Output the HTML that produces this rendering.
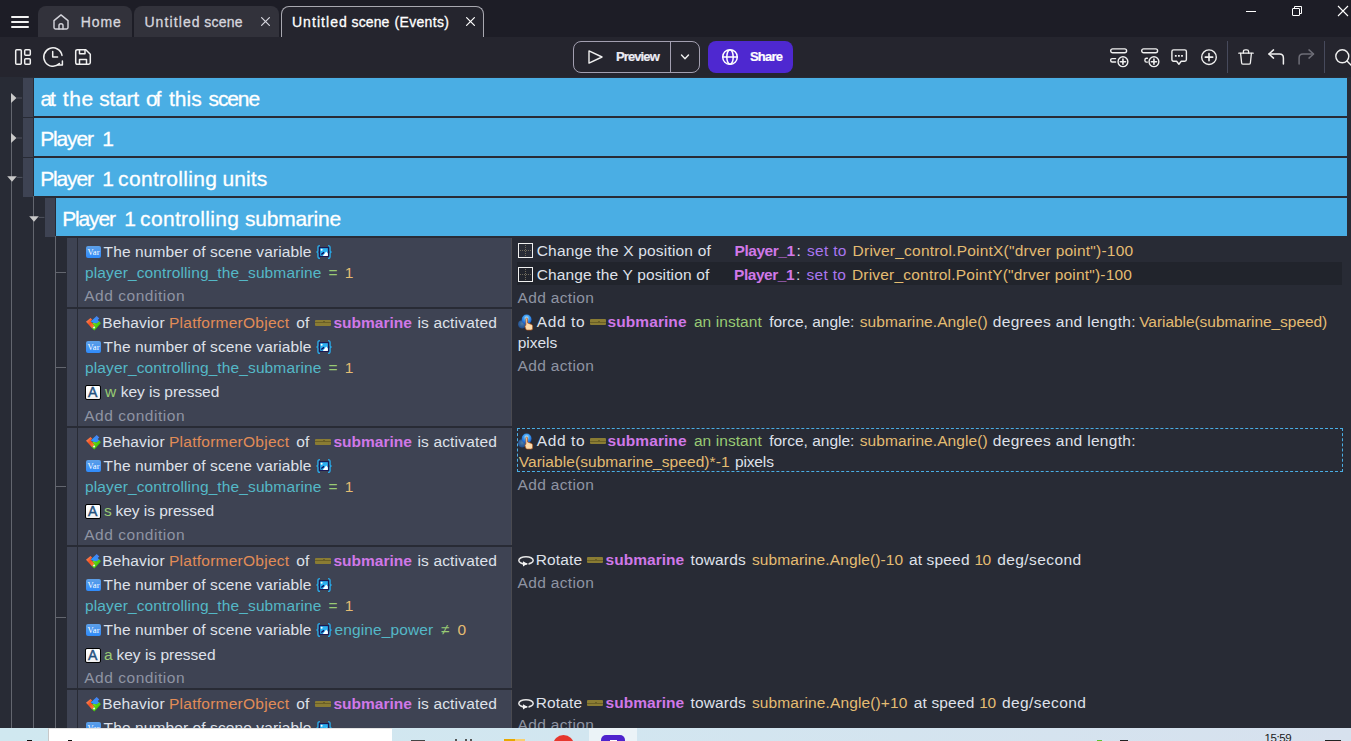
<!DOCTYPE html>
<html><head><meta charset="utf-8"><title>Untitled scene (Events)</title>
<style>
html,body{margin:0;padding:0;}
body{width:1351px;height:741px;overflow:hidden;background:#282b35;position:relative;font-family:"Liberation Sans",sans-serif;}
.t{position:absolute;white-space:pre;line-height:1;}
svg{position:absolute;overflow:visible;}
</style></head><body>
<div style="position:absolute;left:0px;top:0px;width:1351px;height:37px;background:#1d1d26;"></div><div style="position:absolute;left:11px;top:16px;width:18px;height:2px;background:#f2f2f2;border-radius:1px;"></div><div style="position:absolute;left:11px;top:21px;width:18px;height:2px;background:#f2f2f2;border-radius:1px;"></div><div style="position:absolute;left:11px;top:26px;width:18px;height:2px;background:#f2f2f2;border-radius:1px;"></div><div style="position:absolute;left:38px;top:6px;width:94px;height:31px;background:#32323b;border-radius:8px 8px 0 0;"></div><svg style="left:53px;top:14px" width="16" height="16" viewBox="0 0 16 16" fill="none" stroke="#d2d2d9" stroke-width="1.45" stroke-linejoin="round" stroke-linecap="round"><path d="M1 6.6 L8 0.9 L15 6.6 V13.6 Q15 15 13.6 15 H2.4 Q1 15 1 13.6 Z"/><path d="M6 15 V11.6 Q6 9.8 8 9.8 Q10 9.8 10 11.6 V15"/></svg><span class="t" style="left:80.70px;top:15.15px;font-size:14px;color:#d6d6de;letter-spacing:0.914px;-webkit-text-stroke:0.3px #d6d6de;">Home</span><div style="position:absolute;left:134px;top:6px;width:145px;height:31px;background:#32323b;border-radius:8px 8px 0 0;"></div><span class="t" style="left:144.40px;top:15.15px;font-size:14px;color:#d6d6de;letter-spacing:1.102px;-webkit-text-stroke:0.3px #d6d6de;">Untitled</span><span class="t" style="left:204.20px;top:15.15px;font-size:14px;color:#d6d6de;letter-spacing:0.257px;-webkit-text-stroke:0.3px #d6d6de;">scene</span><svg style="left:261px;top:17px" width="9" height="9" viewBox="0 0 9 9" stroke="#d6d6de" stroke-width="1.2" stroke-linecap="round"><path d="M0.6 0.6 L8.4 8.4 M8.4 0.6 L0.6 8.4"/></svg><div style="position:absolute;left:281px;top:6px;width:201px;height:31px;background:#25252e;border:1px solid #a8a8b0;border-bottom:none;border-radius:8px 8px 0 0;"></div><span class="t" style="left:291.90px;top:15.15px;font-size:14px;color:#ffffff;letter-spacing:1.074px;-webkit-text-stroke:0.3px #fff;">Untitled</span><span class="t" style="left:351.50px;top:15.15px;font-size:14px;color:#ffffff;letter-spacing:0.132px;-webkit-text-stroke:0.3px #fff;">scene</span><span class="t" style="left:394.60px;top:15.15px;font-size:14px;color:#ffffff;letter-spacing:0.305px;-webkit-text-stroke:0.3px #fff;">(Events)</span><svg style="left:466px;top:17px" width="9" height="9" viewBox="0 0 9 9" stroke="#ffffff" stroke-width="1.2" stroke-linecap="round"><path d="M0.6 0.6 L8.4 8.4 M8.4 0.6 L0.6 8.4"/></svg><div style="position:absolute;left:1246px;top:11px;width:10px;height:1px;background:#ffffff;"></div><svg style="left:1292px;top:6px" width="10" height="10" viewBox="0 0 10 10" fill="none" stroke="#ffffff" stroke-width="1"><rect x="0.5" y="2.5" width="7" height="7" rx="0.3"/><path d="M2.5 2.5 V0.5 H9.5 V7.5 H7.5"/></svg><svg style="left:1338px;top:6px" width="10" height="10" viewBox="0 0 10 10" stroke="#ffffff" stroke-width="1.1"><path d="M0 0 L10 10 M10 0 L0 10"/></svg><div style="position:absolute;left:0px;top:37px;width:1351px;height:40px;background:#25252e;"></div><svg style="left:15px;top:49px" width="16" height="16" viewBox="0 0 16 16" fill="none" stroke="#f0f0f0" stroke-width="1.5"><rect x="0.7" y="0.7" width="5.6" height="14.6" rx="1"/><rect x="9.7" y="0.7" width="5.6" height="5.6" rx="1"/><rect x="9.7" y="9.7" width="5.6" height="5.6" rx="1"/></svg><svg style="left:43px;top:47px" width="20" height="20" viewBox="0 0 20 20" fill="none" stroke="#f0f0f0" stroke-width="1.5" stroke-linecap="round" stroke-linejoin="round"><path d="M19 8.4 A9.2 9.2 0 1 0 16.4 16.6"/><path d="M19.4 14 V18 H15.4"/><path d="M9.7 4.6 V9.9 H14.6"/></svg><svg style="left:75px;top:49px" width="16" height="16" viewBox="0 0 16 16" fill="none" stroke="#f0f0f0" stroke-width="1.5" stroke-linejoin="round"><path d="M2.4 0.7 H10.8 L15.3 5.2 V13.6 Q15.3 15.3 13.6 15.3 H2.4 Q0.7 15.3 0.7 13.6 V2.4 Q0.7 0.7 2.4 0.7 Z"/><path d="M4.5 0.7 V4.7 H10 V0.7"/><path d="M4.5 15.3 V10.5 H11.5 V15.3"/></svg><div style="position:absolute;left:573px;top:41px;width:125px;height:30px;border:1px solid #a29fb0;border-radius:8px;"></div><div style="position:absolute;left:670px;top:41px;width:1px;height:32px;background:#a29fb0;"></div><svg style="left:587.7px;top:50px" width="15" height="14" viewBox="0 0 15 14" fill="none" stroke="#f0f0f0" stroke-width="1.4" stroke-linejoin="round"><path d="M1 0.9 L14 7 L1 13.1 Z"/></svg><span class="t" style="left:615.90px;top:50.00px;font-size:13px;color:#ececf4;font-weight:700;letter-spacing:-0.872px;-webkit-text-stroke:0.2px #ececf4;">Preview</span><svg style="left:680px;top:54px" width="10" height="6" viewBox="0 0 10 6" fill="none" stroke="#f0f0f0" stroke-width="1.4" stroke-linecap="round" stroke-linejoin="round"><path d="M1.5 1 L5 4.7 L8.5 1"/></svg><div style="position:absolute;left:708px;top:41px;width:85px;height:32px;background:#4e28d0;border-radius:8px;"></div><svg style="left:722px;top:49px" width="16" height="16" viewBox="0 0 16 16" fill="none" stroke="#ffffff" stroke-width="1.5"><circle cx="8" cy="8" r="7.3"/><ellipse cx="8" cy="8" rx="3.2" ry="7.3"/><path d="M0.7 8 H15.3"/></svg><span class="t" style="left:750.00px;top:50.00px;font-size:13px;color:#ffffff;font-weight:700;letter-spacing:-0.800px;-webkit-text-stroke:0.2px #fff;">Share</span><svg style="left:1109.6px;top:48.4px" width="19" height="20" viewBox="0 0 19 20" fill="none" stroke="#f0f0f0" stroke-width="1.4" stroke-linecap="round"><rect x="0.7" y="0.9" width="15.9" height="3.9" rx="1.95"/><path d="M5.6 10.6 H2.2 Q0.7 10.6 0.7 12.1 V12.5 Q0.7 14 2.2 14 H5.6"/><circle cx="12.95" cy="13.7" r="4.9"/><path d="M12.95 11.1 V16.3 M10.35 13.7 H15.55" stroke-width="1.6"/></svg><svg style="left:1140.6px;top:48.4px" width="19" height="20" viewBox="0 0 19 20" fill="none" stroke="#f0f0f0" stroke-width="1.4" stroke-linecap="round"><rect x="0.7" y="0.9" width="15.9" height="3.9" rx="1.95"/><path d="M6.4 10.3 H5.6 Q3.9 10.3 3.9 12 V12.4 Q3.9 14.1 5.6 14.1 H6.4"/><circle cx="12.95" cy="13.7" r="4.9"/><path d="M12.95 11.1 V16.3 M10.35 13.7 H15.55" stroke-width="1.6"/></svg><svg style="left:1171px;top:49px" width="17" height="17" viewBox="0 0 17 17" fill="none" stroke="#f0f0f0" stroke-width="1.4" stroke-linejoin="round"><path d="M2.6 0.85 H13.7 Q15.4 0.85 15.4 2.55 V10.55 Q15.4 12.25 13.7 12.25 H10.2 L7.9 15.2 L5.6 12.25 H2.6 Q0.9 12.25 0.9 10.55 V2.55 Q0.9 0.85 2.6 0.85 Z"/><path d="M3.9 6.9 H5.7 M7 6.9 H8.8 M10.1 6.9 H11.9" stroke-width="1.7"/></svg><svg style="left:1201px;top:49px" width="17" height="17" viewBox="0 0 17 17" fill="none" stroke="#f0f0f0" stroke-width="1.4" stroke-linecap="round"><circle cx="8" cy="8.15" r="7.3"/><path d="M8 4.5 V11.8 M4.3 8.15 H11.7" stroke-width="1.6"/></svg><div style="position:absolute;left:1227px;top:41px;width:1px;height:32px;background:#474a5c;"></div><svg style="left:1238px;top:49px" width="16" height="16" viewBox="0 0 16 16" fill="none" stroke="#f0f0f0" stroke-width="1.3" stroke-linecap="round" stroke-linejoin="round"><path d="M0.8 4.2 H15.2"/><path d="M5.4 4 V2.6 Q5.4 0.8 7.2 0.8 H8.8 Q10.6 0.8 10.6 2.6 V4"/><path d="M2.6 4.4 L3.6 13.8 Q3.8 15.2 5.2 15.2 H10.8 Q12.2 15.2 12.4 13.8 L13.4 4.4"/></svg><svg style="left:1268px;top:49px" width="17" height="16" viewBox="0 0 17 16" fill="none" stroke="#f0f0f0" stroke-width="1.5" stroke-linecap="round" stroke-linejoin="round"><path d="M5.5 0.9 L0.9 5 L5.5 9.1"/><path d="M1.1 5 H11.5 Q15.4 5 15.4 8.9 V15"/></svg><svg style="left:1298px;top:49px" width="17" height="16" viewBox="0 0 17 16" fill="none" stroke="#6e6e77" stroke-width="1.5" stroke-linecap="round" stroke-linejoin="round"><path d="M11 0.9 L15.6 5 L11 9.1"/><path d="M15.4 5 H5 Q1.1 5 1.1 8.9 V15"/></svg><div style="position:absolute;left:1324px;top:41px;width:1px;height:32px;background:#474a5c;"></div><svg style="left:1335px;top:49px" width="18" height="18" viewBox="0 0 18 18" fill="none" stroke="#f0f0f0" stroke-width="1.4" stroke-linecap="round"><circle cx="7.3" cy="7.3" r="6.5"/><path d="M12 12 L16.5 16.5"/></svg><div style="position:absolute;left:0px;top:77px;width:1351px;height:651px;background:#282b35;"></div><div style="position:absolute;left:11px;top:97px;width:1px;height:631px;background:#63666f;"></div><div style="position:absolute;left:33px;top:196px;width:1px;height:532px;background:#63666f;"></div><div style="position:absolute;left:55px;top:236px;width:1px;height:492px;background:#63666f;"></div><svg style="left:11px;top:92.5px" width="12" height="10" viewBox="0 0 12 10"><path d="M0 0 L5.5 5 L0 10 Z" fill="#c9c9c9"/><path d="M5.5 5 H11" stroke="#50535e" stroke-width="1"/></svg><svg style="left:11px;top:132.5px" width="12" height="10" viewBox="0 0 12 10"><path d="M0 0 L5.5 5 L0 10 Z" fill="#c9c9c9"/><path d="M5.5 5 H11" stroke="#50535e" stroke-width="1"/></svg><svg style="left:6.5px;top:176.1px" width="17" height="7" viewBox="0 0 17 7"><path d="M0.2 0.3 H9.8 L5 5.7 Z" fill="#c9c9c9"/><path d="M9.7 1.4 H15.4" stroke="#50535e" stroke-width="1"/></svg><svg style="left:28.5px;top:216.1px" width="17" height="7" viewBox="0 0 17 7"><path d="M0.2 0.3 H9.8 L5 5.7 Z" fill="#c9c9c9"/><path d="M9.7 1.4 H15.4" stroke="#50535e" stroke-width="1"/></svg><div style="position:absolute;left:23px;top:78px;width:10px;height:39px;background:#3e4353;"></div><div style="position:absolute;left:34px;top:78px;width:1313px;height:38px;background:#4aaee4;"></div><span class="t" style="left:40.60px;top:88.12px;font-size:21px;color:#ffffff;letter-spacing:-2.279px;-webkit-text-stroke:0.3px #fff;">at</span><span class="t" style="left:62.70px;top:88.12px;font-size:21px;color:#ffffff;letter-spacing:0.643px;-webkit-text-stroke:0.3px #fff;">the</span><span class="t" style="left:99.30px;top:88.12px;font-size:21px;color:#ffffff;letter-spacing:-0.252px;-webkit-text-stroke:0.3px #fff;">start</span><span class="t" style="left:146.00px;top:88.12px;font-size:21px;color:#ffffff;letter-spacing:-2.279px;-webkit-text-stroke:0.3px #fff;">of</span><span class="t" style="left:169.00px;top:88.12px;font-size:21px;color:#ffffff;letter-spacing:0.040px;-webkit-text-stroke:0.3px #fff;">this</span><span class="t" style="left:208.60px;top:88.12px;font-size:21px;color:#ffffff;letter-spacing:-1.140px;-webkit-text-stroke:0.3px #fff;">scene</span><div style="position:absolute;left:23px;top:118px;width:10px;height:39px;background:#3e4353;"></div><div style="position:absolute;left:34px;top:118px;width:1313px;height:38px;background:#4aaee4;"></div><span class="t" style="left:40.20px;top:128.12px;font-size:21px;color:#ffffff;letter-spacing:-1.166px;-webkit-text-stroke:0.3px #fff;">Player</span><span class="t" style="left:102.30px;top:128.12px;font-size:21px;color:#ffffff;-webkit-text-stroke:0.3px #fff;">1</span><div style="position:absolute;left:23px;top:158px;width:10px;height:39px;background:#3e4353;"></div><div style="position:absolute;left:34px;top:158px;width:1313px;height:38px;background:#4aaee4;"></div><span class="t" style="left:40.20px;top:168.12px;font-size:21px;color:#ffffff;letter-spacing:-1.166px;-webkit-text-stroke:0.3px #fff;">Player</span><span class="t" style="left:102.30px;top:168.12px;font-size:21px;color:#ffffff;-webkit-text-stroke:0.3px #fff;">1</span><span class="t" style="left:118.10px;top:168.12px;font-size:21px;color:#ffffff;letter-spacing:0.316px;-webkit-text-stroke:0.3px #fff;">controlling</span><span class="t" style="left:222.40px;top:168.12px;font-size:21px;color:#ffffff;letter-spacing:0.110px;-webkit-text-stroke:0.3px #fff;">units</span><div style="position:absolute;left:45px;top:198px;width:10px;height:39px;background:#3e4353;"></div><div style="position:absolute;left:56px;top:198px;width:1291px;height:38px;background:#4aaee4;"></div><span class="t" style="left:62.20px;top:208.12px;font-size:21px;color:#ffffff;letter-spacing:-1.166px;-webkit-text-stroke:0.3px #fff;">Player</span><span class="t" style="left:124.30px;top:208.12px;font-size:21px;color:#ffffff;-webkit-text-stroke:0.3px #fff;">1</span><span class="t" style="left:140.10px;top:208.12px;font-size:21px;color:#ffffff;letter-spacing:0.316px;-webkit-text-stroke:0.3px #fff;">controlling</span><span class="t" style="left:245.00px;top:208.12px;font-size:21px;color:#ffffff;letter-spacing:-0.234px;-webkit-text-stroke:0.3px #fff;">submarine</span><div style="position:absolute;left:67px;top:238px;width:10px;height:69px;background:#3e4353;"></div><div style="position:absolute;left:78px;top:238px;width:434px;height:69px;background:#3e4353;"></div><div style="position:absolute;left:511px;top:238px;width:1px;height:69px;background:#4a4a50;"></div><div style="position:absolute;left:55px;top:272px;width:11px;height:1px;background:#63666f;"></div><div style="position:absolute;left:86px;top:246px;width:15px;height:12px;border-radius:2px;background:linear-gradient(#5e9fe6,#2f8bfb);"></div><span class="t" style="left:87.50px;top:248.40px;font-size:8.5px;color:#ffffff;letter-spacing:0.166px;font-family:'Liberation Serif', serif;">Var</span><span class="t" style="left:103.60px;top:243.88px;font-size:15.5px;color:#dfe1ea;letter-spacing:0.099px;">The number of scene variable</span><svg style="left:316px;top:244.9px" width="16" height="14" viewBox="0 0 16 14" fill="none"><path d="M4 0.6 Q1.9 0.6 1.9 2.5 V5.4 Q1.9 7 0.4 7 Q1.9 7 1.9 8.6 V11.5 Q1.9 13.4 4 13.4" stroke="#29a9e8" stroke-width="1.3"/><path d="M12 0.6 Q14.1 0.6 14.1 2.5 V5.4 Q14.1 7 15.6 7 Q14.1 7 14.1 8.6 V11.5 Q14.1 13.4 12 13.4" stroke="#29a9e8" stroke-width="1.3"/><rect x="3.6" y="2.6" width="8.8" height="8.8" fill="#2cb1f0" stroke="#1c1550" stroke-width="1.1"/><circle cx="5.6" cy="4.7" r="1" fill="#ffffff"/><path d="M6.8 10.9 L10.2 6.6 L11.9 8.4 V10.9 Z" fill="#ffffff"/><path d="M5.3 9.5 L8 7.4" stroke="#0a0a5a" stroke-width="1.4"/></svg><span class="t" style="left:85.00px;top:264.88px;font-size:15.5px;color:#54b8c7;letter-spacing:0.119px;">player_controlling_the_submarine</span><span class="t" style="left:328.50px;top:264.88px;font-size:15.5px;color:#98ca74;">=</span><span class="t" style="left:344.70px;top:264.88px;font-size:15.5px;color:#e4bc72;">1</span><span class="t" style="left:84.20px;top:287.88px;font-size:15.5px;color:#8f94a3;letter-spacing:0.532px;">Add condition</span><div style="position:absolute;left:517px;top:262px;width:825px;height:23px;background:#21242c;"></div><div style="position:absolute;left:518px;top:243px;width:13px;height:13px;border:1px solid #f0f0f0;"></div><div style="position:absolute;left:520px;top:250px;width:11px;height:0;border-top:1px dotted #6f6a5c;"></div><div style="position:absolute;left:525px;top:245px;width:0;height:11px;border-left:1px dotted #6f6a5c;"></div><span class="t" style="left:536.70px;top:242.88px;font-size:15.5px;color:#dfe1ea;letter-spacing:0.189px;">Change the X position of</span><span class="t" style="left:734.50px;top:242.88px;font-size:15.5px;color:#d078e8;font-weight:700;letter-spacing:-0.451px;">Player_1</span><span class="t" style="left:796.50px;top:242.88px;font-size:15.5px;color:#dfe1ea;">:</span><span class="t" style="left:807.00px;top:242.88px;font-size:15.5px;color:#aa76f0;letter-spacing:0.302px;">set to</span><span class="t" style="left:852.60px;top:242.88px;font-size:15.5px;color:#e4bc72;letter-spacing:0.218px;">Driver_control.PointX("drver point")-100</span><div style="position:absolute;left:518px;top:267px;width:13px;height:13px;border:1px solid #f0f0f0;"></div><div style="position:absolute;left:520px;top:274px;width:11px;height:0;border-top:1px dotted #6f6a5c;"></div><div style="position:absolute;left:525px;top:269px;width:0;height:11px;border-left:1px dotted #6f6a5c;"></div><span class="t" style="left:536.70px;top:266.88px;font-size:15.5px;color:#dfe1ea;letter-spacing:0.146px;">Change the Y position of</span><span class="t" style="left:734.00px;top:266.88px;font-size:15.5px;color:#d078e8;font-weight:700;letter-spacing:-0.451px;">Player_1</span><span class="t" style="left:796.00px;top:266.88px;font-size:15.5px;color:#dfe1ea;">:</span><span class="t" style="left:806.50px;top:266.88px;font-size:15.5px;color:#aa76f0;letter-spacing:0.302px;">set to</span><span class="t" style="left:851.90px;top:266.88px;font-size:15.5px;color:#e4bc72;letter-spacing:0.207px;">Driver_control.PointY("drver point")-100</span><span class="t" style="left:517.50px;top:289.88px;font-size:15.5px;color:#8f94a3;letter-spacing:0.353px;">Add action</span><div style="position:absolute;left:67px;top:309px;width:10px;height:117px;background:#3e4353;"></div><div style="position:absolute;left:78px;top:309px;width:434px;height:117px;background:#3e4353;"></div><div style="position:absolute;left:511px;top:309px;width:1px;height:117px;background:#4a4a50;"></div><div style="position:absolute;left:55px;top:367px;width:11px;height:1px;background:#63666f;"></div><svg style="left:85.6px;top:315.6px" width="15" height="15" viewBox="0 0 15 15"><defs><linearGradient id="bo" x1="0" y1="0" x2="1" y2="1"><stop offset="0" stop-color="#ff9a70"/><stop offset=".5" stop-color="#f4511e"/><stop offset="1" stop-color="#ff8a3c"/></linearGradient><linearGradient id="bb" x1="0" y1="1" x2="1" y2="0"><stop offset="0" stop-color="#22a0ff"/><stop offset="1" stop-color="#4d7df0"/></linearGradient><linearGradient id="bg" x1="0" y1="0" x2="1" y2="1"><stop offset="0" stop-color="#8af01a"/><stop offset="1" stop-color="#18a800"/></linearGradient></defs><path d="M0 5.7 L4.5 1.9 L6.2 3.4 L4.7 5.4 L8.4 9.5 L6.2 12.5 Z" fill="url(#bo)"/><path d="M4.7 5.4 L10.7 0.1 L13.3 2.4 L11.7 4 L13.3 5.6 L10.7 7.6 L7.1 6.8 Z" fill="url(#bb)"/><path d="M7 6.7 L10.7 7.4 L13.3 5.3 L14.9 7.3 L8.4 14.4 L6.2 12.5 L8.4 9.5 L6.4 7.3 Z" fill="url(#bg)"/><circle cx="8.1" cy="11.5" r="1.1" fill="#ffffff" opacity=".85"/></svg><span class="t" style="left:102.20px;top:314.88px;font-size:15.5px;color:#dfe1ea;letter-spacing:0.170px;">Behavior</span><span class="t" style="left:169.00px;top:314.88px;font-size:15.5px;color:#e28c57;letter-spacing:0.255px;">PlatformerObject</span><span class="t" style="left:296.20px;top:314.88px;font-size:15.5px;color:#dfe1ea;letter-spacing:0.180px;">of</span><div style="position:absolute;left:315px;top:319.7px;width:16px;height:6px;background:#8a7c33;border-radius:1px;"></div><div style="position:absolute;left:315px;top:322.2px;width:16px;height:1px;background:#6a5f26;"></div><div style="position:absolute;left:323px;top:321.2px;width:2px;height:2px;background:#6a5f26;"></div><span class="t" style="left:333.50px;top:314.88px;font-size:15.5px;color:#d078e8;font-weight:700;">submarine</span><span class="t" style="left:417.40px;top:314.88px;font-size:15.5px;color:#dfe1ea;letter-spacing:0.171px;">is activated</span><div style="position:absolute;left:86px;top:341px;width:15px;height:12px;border-radius:2px;background:linear-gradient(#5e9fe6,#2f8bfb);"></div><span class="t" style="left:87.50px;top:343.40px;font-size:8.5px;color:#ffffff;letter-spacing:0.166px;font-family:'Liberation Serif', serif;">Var</span><span class="t" style="left:103.60px;top:338.88px;font-size:15.5px;color:#dfe1ea;letter-spacing:0.099px;">The number of scene variable</span><svg style="left:316px;top:339.9px" width="16" height="14" viewBox="0 0 16 14" fill="none"><path d="M4 0.6 Q1.9 0.6 1.9 2.5 V5.4 Q1.9 7 0.4 7 Q1.9 7 1.9 8.6 V11.5 Q1.9 13.4 4 13.4" stroke="#29a9e8" stroke-width="1.3"/><path d="M12 0.6 Q14.1 0.6 14.1 2.5 V5.4 Q14.1 7 15.6 7 Q14.1 7 14.1 8.6 V11.5 Q14.1 13.4 12 13.4" stroke="#29a9e8" stroke-width="1.3"/><rect x="3.6" y="2.6" width="8.8" height="8.8" fill="#2cb1f0" stroke="#1c1550" stroke-width="1.1"/><circle cx="5.6" cy="4.7" r="1" fill="#ffffff"/><path d="M6.8 10.9 L10.2 6.6 L11.9 8.4 V10.9 Z" fill="#ffffff"/><path d="M5.3 9.5 L8 7.4" stroke="#0a0a5a" stroke-width="1.4"/></svg><span class="t" style="left:85.00px;top:359.88px;font-size:15.5px;color:#54b8c7;letter-spacing:0.119px;">player_controlling_the_submarine</span><span class="t" style="left:328.50px;top:359.88px;font-size:15.5px;color:#98ca74;">=</span><span class="t" style="left:344.70px;top:359.88px;font-size:15.5px;color:#e4bc72;">1</span><div style="position:absolute;left:85px;top:384.9px;width:14px;height:13px;border:1px solid #000000;border-radius:2px;background:linear-gradient(#ffffff,#f0f0f0);"></div><span class="t" style="left:88.00px;top:384.95px;font-size:14px;color:#23507e;-webkit-text-stroke:0.45px #23507e;">A</span><span class="t" style="left:105.00px;top:383.88px;font-size:15.5px;color:#98ca74;">w</span><span class="t" style="left:120.70px;top:383.88px;font-size:15.5px;color:#dfe1ea;letter-spacing:-0.035px;">key is pressed</span><span class="t" style="left:84.20px;top:407.88px;font-size:15.5px;color:#8f94a3;letter-spacing:0.532px;">Add condition</span><svg style="left:518px;top:315.5px" width="16" height="16" viewBox="0 0 16 16"><defs><radialGradient id="fs" cx=".5" cy=".35" r=".65"><stop offset="0" stop-color="#c8f0ff"/><stop offset=".45" stop-color="#3d9df0"/><stop offset="1" stop-color="#1552c8"/></radialGradient><radialGradient id="fd" cx=".5" cy=".4" r=".6"><stop offset="0" stop-color="#4f7fa8"/><stop offset="1" stop-color="#1d4a8c"/></radialGradient></defs><circle cx="4.2" cy="8.3" r="4.1" fill="url(#fd)"/><circle cx="8.6" cy="3.5" r="4.9" fill="url(#fs)"/><path d="M7.9 3.0 Q7.9 2.0 8.7 2.0 Q9.5 2.0 9.5 3.0 V7.0 L13.4 8.4 Q14.6 8.9 14.6 10.2 V12.4 Q14.6 14.1 12.9 14.1 H9.4 Q8.3 14.1 7.9 13.2 L7 10.8 Q6.8 9.5 7.9 9.3 Z" fill="#fcdcae" stroke="#b5541a" stroke-width=".7"/></svg><span class="t" style="left:536.70px;top:314.38px;font-size:15.5px;color:#dfe1ea;letter-spacing:0.622px;">Add to</span><div style="position:absolute;left:590px;top:319.2px;width:16px;height:6px;background:#8a7c33;border-radius:1px;"></div><div style="position:absolute;left:590px;top:321.7px;width:16px;height:1px;background:#6a5f26;"></div><div style="position:absolute;left:598px;top:320.7px;width:2px;height:2px;background:#6a5f26;"></div><span class="t" style="left:607.60px;top:314.38px;font-size:15.5px;color:#d078e8;font-weight:700;letter-spacing:0.067px;">submarine</span><span class="t" style="left:693.90px;top:314.38px;font-size:15.5px;color:#98ca74;letter-spacing:0.077px;">an instant</span><span class="t" style="left:769.20px;top:314.38px;font-size:15.5px;color:#dfe1ea;letter-spacing:-0.008px;">force, angle:</span><span class="t" style="left:859.70px;top:314.38px;font-size:15.5px;color:#e4bc72;letter-spacing:0.083px;">submarine.Angle()</span><span class="t" style="left:992.80px;top:314.38px;font-size:15.5px;color:#dfe1ea;letter-spacing:0.321px;">degrees and length:</span><span class="t" style="left:1139.20px;top:314.38px;font-size:15.5px;color:#e4bc72;letter-spacing:-0.050px;">Variable(submarine_speed)</span><span class="t" style="left:517.70px;top:335.38px;font-size:15.5px;color:#dfe1ea;">pixels</span><span class="t" style="left:517.50px;top:358.38px;font-size:15.5px;color:#8f94a3;letter-spacing:0.353px;">Add action</span><div style="position:absolute;left:67px;top:428px;width:10px;height:117px;background:#3e4353;"></div><div style="position:absolute;left:78px;top:428px;width:434px;height:117px;background:#3e4353;"></div><div style="position:absolute;left:511px;top:428px;width:1px;height:117px;background:#4a4a50;"></div><div style="position:absolute;left:55px;top:486px;width:11px;height:1px;background:#63666f;"></div><svg style="left:85.6px;top:434.6px" width="15" height="15" viewBox="0 0 15 15"><defs><linearGradient id="bo" x1="0" y1="0" x2="1" y2="1"><stop offset="0" stop-color="#ff9a70"/><stop offset=".5" stop-color="#f4511e"/><stop offset="1" stop-color="#ff8a3c"/></linearGradient><linearGradient id="bb" x1="0" y1="1" x2="1" y2="0"><stop offset="0" stop-color="#22a0ff"/><stop offset="1" stop-color="#4d7df0"/></linearGradient><linearGradient id="bg" x1="0" y1="0" x2="1" y2="1"><stop offset="0" stop-color="#8af01a"/><stop offset="1" stop-color="#18a800"/></linearGradient></defs><path d="M0 5.7 L4.5 1.9 L6.2 3.4 L4.7 5.4 L8.4 9.5 L6.2 12.5 Z" fill="url(#bo)"/><path d="M4.7 5.4 L10.7 0.1 L13.3 2.4 L11.7 4 L13.3 5.6 L10.7 7.6 L7.1 6.8 Z" fill="url(#bb)"/><path d="M7 6.7 L10.7 7.4 L13.3 5.3 L14.9 7.3 L8.4 14.4 L6.2 12.5 L8.4 9.5 L6.4 7.3 Z" fill="url(#bg)"/><circle cx="8.1" cy="11.5" r="1.1" fill="#ffffff" opacity=".85"/></svg><span class="t" style="left:102.20px;top:433.88px;font-size:15.5px;color:#dfe1ea;letter-spacing:0.170px;">Behavior</span><span class="t" style="left:169.00px;top:433.88px;font-size:15.5px;color:#e28c57;letter-spacing:0.255px;">PlatformerObject</span><span class="t" style="left:296.20px;top:433.88px;font-size:15.5px;color:#dfe1ea;letter-spacing:0.180px;">of</span><div style="position:absolute;left:315px;top:438.7px;width:16px;height:6px;background:#8a7c33;border-radius:1px;"></div><div style="position:absolute;left:315px;top:441.2px;width:16px;height:1px;background:#6a5f26;"></div><div style="position:absolute;left:323px;top:440.2px;width:2px;height:2px;background:#6a5f26;"></div><span class="t" style="left:333.50px;top:433.88px;font-size:15.5px;color:#d078e8;font-weight:700;">submarine</span><span class="t" style="left:417.40px;top:433.88px;font-size:15.5px;color:#dfe1ea;letter-spacing:0.171px;">is activated</span><div style="position:absolute;left:86px;top:460px;width:15px;height:12px;border-radius:2px;background:linear-gradient(#5e9fe6,#2f8bfb);"></div><span class="t" style="left:87.50px;top:462.40px;font-size:8.5px;color:#ffffff;letter-spacing:0.166px;font-family:'Liberation Serif', serif;">Var</span><span class="t" style="left:103.60px;top:457.88px;font-size:15.5px;color:#dfe1ea;letter-spacing:0.099px;">The number of scene variable</span><svg style="left:316px;top:458.9px" width="16" height="14" viewBox="0 0 16 14" fill="none"><path d="M4 0.6 Q1.9 0.6 1.9 2.5 V5.4 Q1.9 7 0.4 7 Q1.9 7 1.9 8.6 V11.5 Q1.9 13.4 4 13.4" stroke="#29a9e8" stroke-width="1.3"/><path d="M12 0.6 Q14.1 0.6 14.1 2.5 V5.4 Q14.1 7 15.6 7 Q14.1 7 14.1 8.6 V11.5 Q14.1 13.4 12 13.4" stroke="#29a9e8" stroke-width="1.3"/><rect x="3.6" y="2.6" width="8.8" height="8.8" fill="#2cb1f0" stroke="#1c1550" stroke-width="1.1"/><circle cx="5.6" cy="4.7" r="1" fill="#ffffff"/><path d="M6.8 10.9 L10.2 6.6 L11.9 8.4 V10.9 Z" fill="#ffffff"/><path d="M5.3 9.5 L8 7.4" stroke="#0a0a5a" stroke-width="1.4"/></svg><span class="t" style="left:85.00px;top:478.88px;font-size:15.5px;color:#54b8c7;letter-spacing:0.119px;">player_controlling_the_submarine</span><span class="t" style="left:328.50px;top:478.88px;font-size:15.5px;color:#98ca74;">=</span><span class="t" style="left:344.70px;top:478.88px;font-size:15.5px;color:#e4bc72;">1</span><div style="position:absolute;left:85px;top:503.9px;width:14px;height:13px;border:1px solid #000000;border-radius:2px;background:linear-gradient(#ffffff,#f0f0f0);"></div><span class="t" style="left:88.00px;top:503.95px;font-size:14px;color:#23507e;-webkit-text-stroke:0.45px #23507e;">A</span><span class="t" style="left:104.00px;top:502.88px;font-size:15.5px;color:#98ca74;">s</span><span class="t" style="left:115.50px;top:502.88px;font-size:15.5px;color:#dfe1ea;letter-spacing:-0.035px;">key is pressed</span><span class="t" style="left:84.20px;top:526.88px;font-size:15.5px;color:#8f94a3;letter-spacing:0.532px;">Add condition</span><div style="position:absolute;left:517px;top:428px;width:824px;height:42px;border:1px dashed #4aaee4;"></div><svg style="left:518px;top:434.5px" width="16" height="16" viewBox="0 0 16 16"><defs><radialGradient id="fs" cx=".5" cy=".35" r=".65"><stop offset="0" stop-color="#c8f0ff"/><stop offset=".45" stop-color="#3d9df0"/><stop offset="1" stop-color="#1552c8"/></radialGradient><radialGradient id="fd" cx=".5" cy=".4" r=".6"><stop offset="0" stop-color="#4f7fa8"/><stop offset="1" stop-color="#1d4a8c"/></radialGradient></defs><circle cx="4.2" cy="8.3" r="4.1" fill="url(#fd)"/><circle cx="8.6" cy="3.5" r="4.9" fill="url(#fs)"/><path d="M7.9 3.0 Q7.9 2.0 8.7 2.0 Q9.5 2.0 9.5 3.0 V7.0 L13.4 8.4 Q14.6 8.9 14.6 10.2 V12.4 Q14.6 14.1 12.9 14.1 H9.4 Q8.3 14.1 7.9 13.2 L7 10.8 Q6.8 9.5 7.9 9.3 Z" fill="#fcdcae" stroke="#b5541a" stroke-width=".7"/></svg><span class="t" style="left:536.70px;top:433.38px;font-size:15.5px;color:#dfe1ea;letter-spacing:0.622px;">Add to</span><div style="position:absolute;left:590px;top:438.2px;width:16px;height:6px;background:#8a7c33;border-radius:1px;"></div><div style="position:absolute;left:590px;top:440.7px;width:16px;height:1px;background:#6a5f26;"></div><div style="position:absolute;left:598px;top:439.7px;width:2px;height:2px;background:#6a5f26;"></div><span class="t" style="left:607.60px;top:433.38px;font-size:15.5px;color:#d078e8;font-weight:700;letter-spacing:0.067px;">submarine</span><span class="t" style="left:693.90px;top:433.38px;font-size:15.5px;color:#98ca74;letter-spacing:0.077px;">an instant</span><span class="t" style="left:769.20px;top:433.38px;font-size:15.5px;color:#dfe1ea;letter-spacing:-0.008px;">force, angle:</span><span class="t" style="left:859.70px;top:433.38px;font-size:15.5px;color:#e4bc72;letter-spacing:0.083px;">submarine.Angle()</span><span class="t" style="left:992.80px;top:433.38px;font-size:15.5px;color:#dfe1ea;letter-spacing:0.321px;">degrees and length:</span><span class="t" style="left:518.70px;top:454.38px;font-size:15.5px;color:#e4bc72;letter-spacing:0.065px;">Variable(submarine_speed)*-1</span><span class="t" style="left:734.90px;top:454.38px;font-size:15.5px;color:#dfe1ea;letter-spacing:-0.116px;">pixels</span><span class="t" style="left:517.50px;top:476.88px;font-size:15.5px;color:#8f94a3;letter-spacing:0.353px;">Add action</span><div style="position:absolute;left:67px;top:547px;width:10px;height:141px;background:#3e4353;"></div><div style="position:absolute;left:78px;top:547px;width:434px;height:141px;background:#3e4353;"></div><div style="position:absolute;left:511px;top:547px;width:1px;height:141px;background:#4a4a50;"></div><div style="position:absolute;left:55px;top:617px;width:11px;height:1px;background:#63666f;"></div><svg style="left:85.6px;top:553.6px" width="15" height="15" viewBox="0 0 15 15"><defs><linearGradient id="bo" x1="0" y1="0" x2="1" y2="1"><stop offset="0" stop-color="#ff9a70"/><stop offset=".5" stop-color="#f4511e"/><stop offset="1" stop-color="#ff8a3c"/></linearGradient><linearGradient id="bb" x1="0" y1="1" x2="1" y2="0"><stop offset="0" stop-color="#22a0ff"/><stop offset="1" stop-color="#4d7df0"/></linearGradient><linearGradient id="bg" x1="0" y1="0" x2="1" y2="1"><stop offset="0" stop-color="#8af01a"/><stop offset="1" stop-color="#18a800"/></linearGradient></defs><path d="M0 5.7 L4.5 1.9 L6.2 3.4 L4.7 5.4 L8.4 9.5 L6.2 12.5 Z" fill="url(#bo)"/><path d="M4.7 5.4 L10.7 0.1 L13.3 2.4 L11.7 4 L13.3 5.6 L10.7 7.6 L7.1 6.8 Z" fill="url(#bb)"/><path d="M7 6.7 L10.7 7.4 L13.3 5.3 L14.9 7.3 L8.4 14.4 L6.2 12.5 L8.4 9.5 L6.4 7.3 Z" fill="url(#bg)"/><circle cx="8.1" cy="11.5" r="1.1" fill="#ffffff" opacity=".85"/></svg><span class="t" style="left:102.20px;top:552.88px;font-size:15.5px;color:#dfe1ea;letter-spacing:0.170px;">Behavior</span><span class="t" style="left:169.00px;top:552.88px;font-size:15.5px;color:#e28c57;letter-spacing:0.255px;">PlatformerObject</span><span class="t" style="left:296.20px;top:552.88px;font-size:15.5px;color:#dfe1ea;letter-spacing:0.180px;">of</span><div style="position:absolute;left:315px;top:557.7px;width:16px;height:6px;background:#8a7c33;border-radius:1px;"></div><div style="position:absolute;left:315px;top:560.2px;width:16px;height:1px;background:#6a5f26;"></div><div style="position:absolute;left:323px;top:559.2px;width:2px;height:2px;background:#6a5f26;"></div><span class="t" style="left:333.50px;top:552.88px;font-size:15.5px;color:#d078e8;font-weight:700;">submarine</span><span class="t" style="left:417.40px;top:552.88px;font-size:15.5px;color:#dfe1ea;letter-spacing:0.171px;">is activated</span><div style="position:absolute;left:86px;top:579px;width:15px;height:12px;border-radius:2px;background:linear-gradient(#5e9fe6,#2f8bfb);"></div><span class="t" style="left:87.50px;top:581.40px;font-size:8.5px;color:#ffffff;letter-spacing:0.166px;font-family:'Liberation Serif', serif;">Var</span><span class="t" style="left:103.60px;top:576.88px;font-size:15.5px;color:#dfe1ea;letter-spacing:0.099px;">The number of scene variable</span><svg style="left:316px;top:577.9px" width="16" height="14" viewBox="0 0 16 14" fill="none"><path d="M4 0.6 Q1.9 0.6 1.9 2.5 V5.4 Q1.9 7 0.4 7 Q1.9 7 1.9 8.6 V11.5 Q1.9 13.4 4 13.4" stroke="#29a9e8" stroke-width="1.3"/><path d="M12 0.6 Q14.1 0.6 14.1 2.5 V5.4 Q14.1 7 15.6 7 Q14.1 7 14.1 8.6 V11.5 Q14.1 13.4 12 13.4" stroke="#29a9e8" stroke-width="1.3"/><rect x="3.6" y="2.6" width="8.8" height="8.8" fill="#2cb1f0" stroke="#1c1550" stroke-width="1.1"/><circle cx="5.6" cy="4.7" r="1" fill="#ffffff"/><path d="M6.8 10.9 L10.2 6.6 L11.9 8.4 V10.9 Z" fill="#ffffff"/><path d="M5.3 9.5 L8 7.4" stroke="#0a0a5a" stroke-width="1.4"/></svg><span class="t" style="left:85.00px;top:597.88px;font-size:15.5px;color:#54b8c7;letter-spacing:0.119px;">player_controlling_the_submarine</span><span class="t" style="left:328.50px;top:597.88px;font-size:15.5px;color:#98ca74;">=</span><span class="t" style="left:344.70px;top:597.88px;font-size:15.5px;color:#e4bc72;">1</span><div style="position:absolute;left:86px;top:624px;width:15px;height:12px;border-radius:2px;background:linear-gradient(#5e9fe6,#2f8bfb);"></div><span class="t" style="left:87.50px;top:626.40px;font-size:8.5px;color:#ffffff;letter-spacing:0.166px;font-family:'Liberation Serif', serif;">Var</span><span class="t" style="left:103.60px;top:621.88px;font-size:15.5px;color:#dfe1ea;letter-spacing:0.099px;">The number of scene variable</span><svg style="left:316px;top:622.9px" width="16" height="14" viewBox="0 0 16 14" fill="none"><path d="M4 0.6 Q1.9 0.6 1.9 2.5 V5.4 Q1.9 7 0.4 7 Q1.9 7 1.9 8.6 V11.5 Q1.9 13.4 4 13.4" stroke="#29a9e8" stroke-width="1.3"/><path d="M12 0.6 Q14.1 0.6 14.1 2.5 V5.4 Q14.1 7 15.6 7 Q14.1 7 14.1 8.6 V11.5 Q14.1 13.4 12 13.4" stroke="#29a9e8" stroke-width="1.3"/><rect x="3.6" y="2.6" width="8.8" height="8.8" fill="#2cb1f0" stroke="#1c1550" stroke-width="1.1"/><circle cx="5.6" cy="4.7" r="1" fill="#ffffff"/><path d="M6.8 10.9 L10.2 6.6 L11.9 8.4 V10.9 Z" fill="#ffffff"/><path d="M5.3 9.5 L8 7.4" stroke="#0a0a5a" stroke-width="1.4"/></svg><span class="t" style="left:334.50px;top:621.88px;font-size:15.5px;color:#54b8c7;letter-spacing:0.116px;">engine_power</span><span class="t" style="left:441.00px;top:621.88px;font-size:15.5px;color:#98ca74;">≠</span><span class="t" style="left:457.50px;top:621.88px;font-size:15.5px;color:#e4bc72;">0</span><div style="position:absolute;left:85px;top:647.9px;width:14px;height:13px;border:1px solid #000000;border-radius:2px;background:linear-gradient(#ffffff,#f0f0f0);"></div><span class="t" style="left:88.00px;top:647.95px;font-size:14px;color:#23507e;-webkit-text-stroke:0.45px #23507e;">A</span><span class="t" style="left:104.00px;top:646.88px;font-size:15.5px;color:#98ca74;">a</span><span class="t" style="left:116.50px;top:646.88px;font-size:15.5px;color:#dfe1ea;">key is pressed</span><span class="t" style="left:84.20px;top:669.88px;font-size:15.5px;color:#8f94a3;letter-spacing:0.532px;">Add condition</span><svg style="left:518px;top:555.8px" width="16" height="11" viewBox="0 0 16 11" fill="none"><ellipse cx="8" cy="4.4" rx="7.2" ry="3.7" stroke="#e6e6e6" stroke-width="1.5"/><rect x="9.3" y="6.2" width="1.2" height="3.6" fill="#252932"/><path d="M5 5.2 L9.4 7.7 L5 10.4 Z" fill="#f4f4f4"/></svg><span class="t" style="left:535.70px;top:552.38px;font-size:15.5px;color:#dfe1ea;letter-spacing:0.171px;">Rotate</span><div style="position:absolute;left:587.3px;top:557.2px;width:16px;height:6px;background:#8a7c33;border-radius:1px;"></div><div style="position:absolute;left:587.3px;top:559.7px;width:16px;height:1px;background:#6a5f26;"></div><div style="position:absolute;left:595.3px;top:558.7px;width:2px;height:2px;background:#6a5f26;"></div><span class="t" style="left:605.60px;top:552.38px;font-size:15.5px;color:#d078e8;font-weight:700;letter-spacing:0.029px;">submarine</span><span class="t" style="left:690.60px;top:552.38px;font-size:15.5px;color:#dfe1ea;letter-spacing:0.130px;">towards</span><span class="t" style="left:751.90px;top:552.38px;font-size:15.5px;color:#e4bc72;letter-spacing:0.120px;">submarine.Angle()-10</span><span class="t" style="left:908.90px;top:552.38px;font-size:15.5px;color:#dfe1ea;letter-spacing:0.165px;">at speed</span><span class="t" style="left:974.50px;top:552.38px;font-size:15.5px;color:#e4bc72;letter-spacing:-0.520px;">10</span><span class="t" style="left:997.20px;top:552.38px;font-size:15.5px;color:#dfe1ea;letter-spacing:0.419px;">deg/second</span><span class="t" style="left:517.50px;top:575.38px;font-size:15.5px;color:#8f94a3;letter-spacing:0.353px;">Add action</span><div style="position:absolute;left:67px;top:690px;width:10px;height:117px;background:#3e4353;"></div><div style="position:absolute;left:78px;top:690px;width:434px;height:117px;background:#3e4353;"></div><div style="position:absolute;left:511px;top:690px;width:1px;height:117px;background:#4a4a50;"></div><div style="position:absolute;left:55px;top:748px;width:11px;height:1px;background:#63666f;"></div><svg style="left:85.6px;top:696.6px" width="15" height="15" viewBox="0 0 15 15"><defs><linearGradient id="bo" x1="0" y1="0" x2="1" y2="1"><stop offset="0" stop-color="#ff9a70"/><stop offset=".5" stop-color="#f4511e"/><stop offset="1" stop-color="#ff8a3c"/></linearGradient><linearGradient id="bb" x1="0" y1="1" x2="1" y2="0"><stop offset="0" stop-color="#22a0ff"/><stop offset="1" stop-color="#4d7df0"/></linearGradient><linearGradient id="bg" x1="0" y1="0" x2="1" y2="1"><stop offset="0" stop-color="#8af01a"/><stop offset="1" stop-color="#18a800"/></linearGradient></defs><path d="M0 5.7 L4.5 1.9 L6.2 3.4 L4.7 5.4 L8.4 9.5 L6.2 12.5 Z" fill="url(#bo)"/><path d="M4.7 5.4 L10.7 0.1 L13.3 2.4 L11.7 4 L13.3 5.6 L10.7 7.6 L7.1 6.8 Z" fill="url(#bb)"/><path d="M7 6.7 L10.7 7.4 L13.3 5.3 L14.9 7.3 L8.4 14.4 L6.2 12.5 L8.4 9.5 L6.4 7.3 Z" fill="url(#bg)"/><circle cx="8.1" cy="11.5" r="1.1" fill="#ffffff" opacity=".85"/></svg><span class="t" style="left:102.20px;top:695.88px;font-size:15.5px;color:#dfe1ea;letter-spacing:0.170px;">Behavior</span><span class="t" style="left:169.00px;top:695.88px;font-size:15.5px;color:#e28c57;letter-spacing:0.255px;">PlatformerObject</span><span class="t" style="left:296.20px;top:695.88px;font-size:15.5px;color:#dfe1ea;letter-spacing:0.180px;">of</span><div style="position:absolute;left:315px;top:700.7px;width:16px;height:6px;background:#8a7c33;border-radius:1px;"></div><div style="position:absolute;left:315px;top:703.2px;width:16px;height:1px;background:#6a5f26;"></div><div style="position:absolute;left:323px;top:702.2px;width:2px;height:2px;background:#6a5f26;"></div><span class="t" style="left:333.50px;top:695.88px;font-size:15.5px;color:#d078e8;font-weight:700;">submarine</span><span class="t" style="left:417.40px;top:695.88px;font-size:15.5px;color:#dfe1ea;letter-spacing:0.171px;">is activated</span><div style="position:absolute;left:86px;top:722px;width:15px;height:12px;border-radius:2px;background:linear-gradient(#5e9fe6,#2f8bfb);"></div><span class="t" style="left:87.50px;top:724.40px;font-size:8.5px;color:#ffffff;letter-spacing:0.166px;font-family:'Liberation Serif', serif;">Var</span><span class="t" style="left:103.60px;top:719.88px;font-size:15.5px;color:#dfe1ea;letter-spacing:0.099px;">The number of scene variable</span><svg style="left:316px;top:720.9px" width="16" height="14" viewBox="0 0 16 14" fill="none"><path d="M4 0.6 Q1.9 0.6 1.9 2.5 V5.4 Q1.9 7 0.4 7 Q1.9 7 1.9 8.6 V11.5 Q1.9 13.4 4 13.4" stroke="#29a9e8" stroke-width="1.3"/><path d="M12 0.6 Q14.1 0.6 14.1 2.5 V5.4 Q14.1 7 15.6 7 Q14.1 7 14.1 8.6 V11.5 Q14.1 13.4 12 13.4" stroke="#29a9e8" stroke-width="1.3"/><rect x="3.6" y="2.6" width="8.8" height="8.8" fill="#2cb1f0" stroke="#1c1550" stroke-width="1.1"/><circle cx="5.6" cy="4.7" r="1" fill="#ffffff"/><path d="M6.8 10.9 L10.2 6.6 L11.9 8.4 V10.9 Z" fill="#ffffff"/><path d="M5.3 9.5 L8 7.4" stroke="#0a0a5a" stroke-width="1.4"/></svg><svg style="left:518px;top:698.8px" width="16" height="11" viewBox="0 0 16 11" fill="none"><ellipse cx="8" cy="4.4" rx="7.2" ry="3.7" stroke="#e6e6e6" stroke-width="1.5"/><rect x="9.3" y="6.2" width="1.2" height="3.6" fill="#252932"/><path d="M5 5.2 L9.4 7.7 L5 10.4 Z" fill="#f4f4f4"/></svg><span class="t" style="left:535.70px;top:695.38px;font-size:15.5px;color:#dfe1ea;letter-spacing:0.171px;">Rotate</span><div style="position:absolute;left:587.3px;top:700.2px;width:16px;height:6px;background:#8a7c33;border-radius:1px;"></div><div style="position:absolute;left:587.3px;top:702.7px;width:16px;height:1px;background:#6a5f26;"></div><div style="position:absolute;left:595.3px;top:701.7px;width:2px;height:2px;background:#6a5f26;"></div><span class="t" style="left:605.60px;top:695.38px;font-size:15.5px;color:#d078e8;font-weight:700;letter-spacing:0.029px;">submarine</span><span class="t" style="left:690.60px;top:695.38px;font-size:15.5px;color:#dfe1ea;letter-spacing:0.130px;">towards</span><span class="t" style="left:751.90px;top:695.38px;font-size:15.5px;color:#e4bc72;letter-spacing:0.136px;">submarine.Angle()+10</span><span class="t" style="left:913.70px;top:695.38px;font-size:15.5px;color:#dfe1ea;letter-spacing:0.165px;">at speed</span><span class="t" style="left:979.30px;top:695.38px;font-size:15.5px;color:#e4bc72;letter-spacing:-0.520px;">10</span><span class="t" style="left:1002.00px;top:695.38px;font-size:15.5px;color:#dfe1ea;letter-spacing:0.419px;">deg/second</span><span class="t" style="left:517.50px;top:716.88px;font-size:15.5px;color:#8f94a3;letter-spacing:0.353px;">Add action</span><div style="position:absolute;left:0px;top:728px;width:1351px;height:13px;background:linear-gradient(90deg,#d0e8f0 0%,#d2e6f0 45%,#d7e1ee 100%);"></div><div style="position:absolute;left:48px;top:728px;width:344px;height:13px;background:#ffffff;border-left:1px solid #c8c8c8;border-top:1px solid #e4e4e4;box-sizing:border-box;"></div><div style="position:absolute;left:589px;top:728px;width:48px;height:13px;background:#ebf3f7;"></div><div style="position:absolute;left:553px;top:735.4px;width:21px;height:21px;border-radius:50%;background:#e6372d;"></div><div style="position:absolute;left:601px;top:735.4px;width:24px;height:24px;border-radius:5px;background:#4e23cd;"></div><div style="position:absolute;left:610px;top:739.5px;width:7px;height:2px;background:#ffffff;"></div><div style="position:absolute;left:504px;top:739px;width:11px;height:2px;background:#e8a800;"></div><div style="position:absolute;left:515px;top:739px;width:10px;height:2px;background:#f8d070;"></div><span class="t" style="left:1264.60px;top:733.17px;font-size:11.5px;color:#1a1a1a;letter-spacing:-0.421px;">15:59</span><div style="position:absolute;left:1325px;top:739.8px;width:16px;height:2px;background:#222222;"></div><div style="position:absolute;left:27px;top:739.7px;width:5px;height:2px;background:#111111;"></div><div style="position:absolute;left:68px;top:739.7px;width:4px;height:2px;background:#111111;"></div><div style="position:absolute;left:411px;top:739.6px;width:14px;height:2px;background:#444444;"></div><div style="position:absolute;left:455px;top:739.4px;width:2px;height:2px;background:#555555;"></div><div style="position:absolute;left:465px;top:739px;width:2px;height:2px;background:#555555;"></div><div style="position:absolute;left:470px;top:739px;width:2px;height:2px;background:#555555;"></div><div style="position:absolute;left:1097px;top:739.5px;width:5px;height:2px;background:#5fc22e;"></div><div style="position:absolute;left:1120px;top:739.5px;width:8px;height:2px;background:#222222;"></div>
</body></html>
